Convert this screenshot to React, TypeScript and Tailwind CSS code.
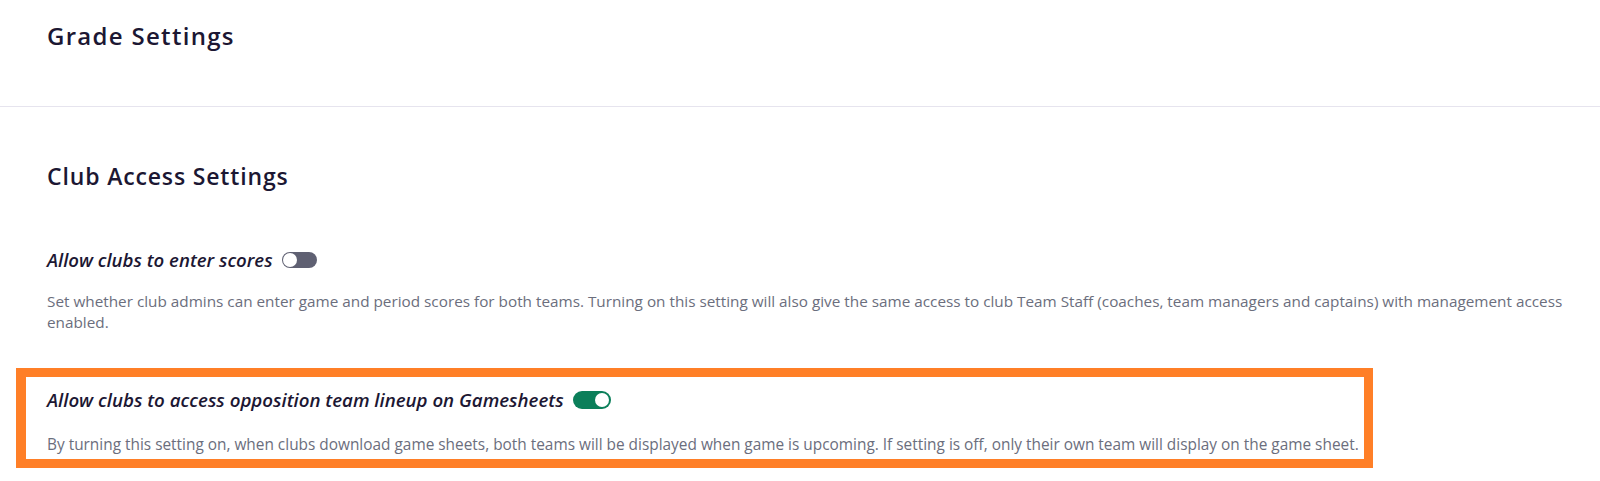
import React from "react";

function Toggle({ on }: { on: boolean }) {
  return on ? (
    <span className="inline-flex items-center w-[38px] h-[18px] rounded-full bg-[#0b7f5a] px-[2px] justify-end">
      <span className="w-[14px] h-[14px] rounded-full bg-white" />
    </span>
  ) : (
    <span className="inline-flex items-center w-[35px] h-[16px] rounded-full bg-[#5f6072] px-[1px] justify-start">
      <span className="w-[14px] h-[14px] rounded-full bg-white" />
    </span>
  );
}

export default function App() {
  return (
    <div className="w-[1600px] h-[481px] bg-white overflow-hidden" style={{ fontFamily: "'Open Sans', Lato, sans-serif" }}>
      <div className="h-[107px] border-b border-[#e6e4ee] px-[47px] pt-[19px]">
        <h1 className="text-[24px] leading-[34px] font-semibold text-[#1c1733] tracking-[1.3px]">Grade Settings</h1>
      </div>
      <div className="pl-[47px] pr-[16px] pt-[52px]">
        <h2 className="text-[23px] leading-[34px] font-semibold text-[#1c1733] tracking-[0.85px]">Club Access Settings</h2>
        <div className="mt-[54px] flex items-center gap-[9px] h-[26px]">
          <span className="italic font-semibold text-[18.6px] text-[#1c1733]">Allow clubs to enter scores</span>
          <Toggle on={false} />
        </div>
        <p className="mt-[18px] text-[15.3px] leading-[21px] text-[#6b6e7d]">
          Set whether club admins can enter game and period scores for both teams. Turning on this setting will also give the same access to club Team Staff (coaches, team managers and captains) with management access enabled.
        </p>
      </div>
      <div className="ml-[16px] mt-[35px] w-[1357px] border-[9px] border-l-[10px] border-[#ff7f27] px-[21px] pt-[9px] pb-[4px]">
        <div className="flex items-center gap-[9px] h-[28px]">
          <span className="italic font-semibold text-[18.7px] text-[#1c1733]">Allow clubs to access opposition team lineup on Gamesheets</span>
          <Toggle on={true} />
        </div>
        <p className="mt-[20px] text-[15.4px] leading-[21px] text-[#6b6e7d] whitespace-nowrap">
          By turning this setting on, when clubs download game sheets, both teams will be displayed when game is upcoming. If setting is off, only their own team will display on the game sheet.
        </p>
      </div>
    </div>
  );
}
